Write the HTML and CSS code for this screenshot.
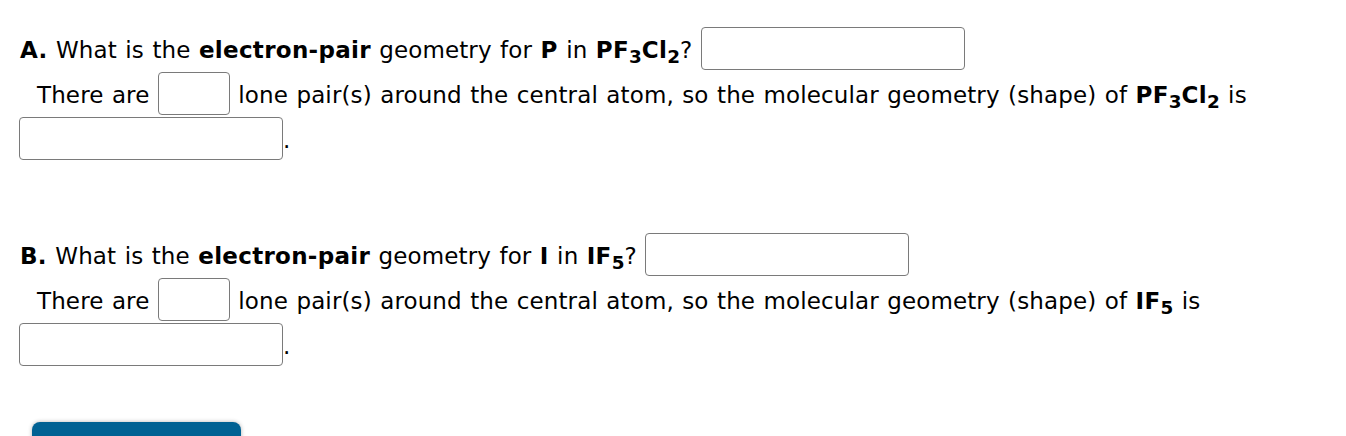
FILE: index.html
```html
<!DOCTYPE html>
<html>
<head>
<meta charset="utf-8">
<link rel="stylesheet" href="styles.css">
</head>
<body>
<div class="page">
  <div class="part">
    <div class="q"><b>A.</b> What is the <b>electron-pair</b> geometry for <b>P</b> in <b>PF<sub>3</sub>Cl<sub>2</sub></b>? <span class="box wide"></span></div>
    <div class="q indent">There are <span class="box small"></span> lone pair(s) around the central atom, so the molecular geometry (shape) of <b>PF<sub>3</sub>Cl<sub>2</sub></b> is <span class="box wide"></span>.</div>
  </div>
  <div class="part">
    <div class="q"><b>B.</b> What is the <b>electron-pair</b> geometry for <b>I</b> in <b>IF<sub>5</sub></b>? <span class="box wide"></span></div>
    <div class="q indent">There are <span class="box small"></span> lone pair(s) around the central atom, so the molecular geometry (shape) of <b>IF<sub>5</sub></b> is <span class="box wide"></span>.</div>
  </div>
  <div class="actions"><span class="btn"></span></div>
</div>
</body>
</html>
```
FILE: styles.css
```css
html, body {
  margin: 0;
  background: #fff;
}
body {
  font-family: Verdana, "DejaVu Sans", sans-serif;
  font-size: 23px;
  color: #000;
  overflow: hidden;
}
.page {
  padding: 27px 19px 0 19px;
}
.part {
  margin-bottom: 71px;
}
.q {
  line-height: 44px;
  padding-left: 1px;
  letter-spacing: 0.12px;
  word-spacing: 1px;
}
.q b {
  letter-spacing: 0.3px;
}
.q sub {
  letter-spacing: 0;
}
.indent {
  text-indent: 17px;
}
.box {
  display: inline-block;
  box-sizing: border-box;
  height: 43px;
  border: 1px solid #7a7a7a;
  border-radius: 4px;
  background: #fff;
  vertical-align: -12px;
  text-indent: 0;
}
.wide {
  width: 264px;
}
.small {
  width: 72px;
}
.indent .wide {
  margin-left: -1px;
}
sub {
  font-size: 0.8em;
  vertical-align: -0.25em;
  line-height: 0;
}
.actions {
  margin-top: -17px;
  padding-left: 13px;
}
.btn {
  display: inline-block;
  width: 209px;
  height: 40px;
  background: #006193;
  border-radius: 8px;
  box-shadow: 0 0 4px rgba(0,0,0,0.3);
}
```
